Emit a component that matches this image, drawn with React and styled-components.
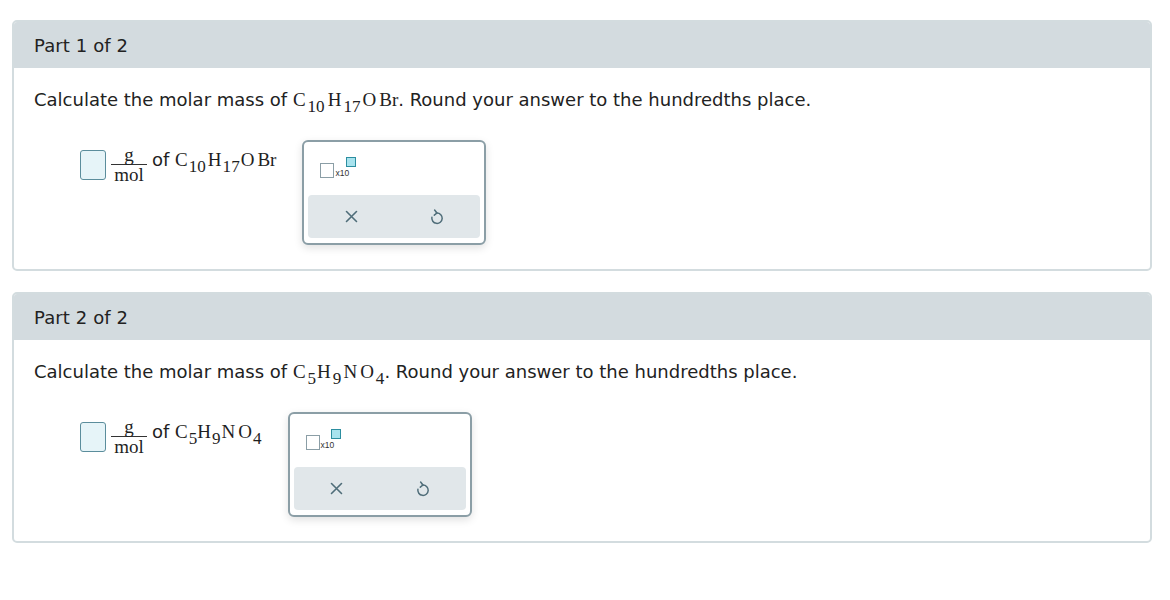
import React from "react";
import styled, { createGlobalStyle } from "styled-components";

const Global = createGlobalStyle`
  html, body { margin: 0; padding: 0; background: #ffffff; }
  body { font-family: "DejaVu Sans", Verdana, sans-serif; color: #1f1f1f; }
`;

const Page = styled.div`
  padding: 20px 18px 0 12px;
  display: flex;
  flex-direction: column;
  gap: 21px;
`;

const Card = styled.section`
  border: 2px solid #d3dcdf;
  border-radius: 5px;
  overflow: hidden;
  background: #fff;
`;

const Header = styled.div`
  height: 46px;
  background: #d3dbdf;
  display: flex;
  align-items: center;
  padding-left: 20px;
  font-size: 18px;
  letter-spacing: 0.1px;
  color: #222;
`;

const Body = styled.div`
  padding: 20px 20px 24px 20px;
`;

const Question = styled.div`
  font-size: 18px;
  line-height: 24px;
  height: 24px;
  color: #222;
  white-space: nowrap;
`;

const Formula = styled.span`
  font-family: "Liberation Serif", "Times New Roman", serif;
  font-size: 19px;
  letter-spacing: 0;
  word-spacing: 0;
`;

const Sub = styled.span`
  font-size: 0.9em;
  position: relative;
  top: 0.38em;
  line-height: 0;
  margin: 0 ${(p) => p.$gap}px 0 ${(p) => (p.$lead === undefined ? 2 : p.$lead)}px;
`;

const Thin = styled.span`
  display: inline-block;
  width: ${(p) => p.$w}px;
`;

const AnswerRow = styled.div`
  display: flex;
  align-items: flex-start;
  margin-top: 28px;
  padding-left: 46px;
`;

const Answer = styled.div`
  display: flex;
  align-items: flex-start;
  padding-top: 10px;
  margin-right: 26px;
`;

const InputBox = styled.div`
  box-sizing: border-box;
  width: 26px;
  height: 30px;
  border: 1.5px solid #5b8d9c;
  border-radius: 3px;
  background: #e6f4f8;
  margin-right: 5px;
`;

const Fraction = styled.span`
  display: inline-flex;
  flex-direction: column;
  align-items: center;
  font-family: "Liberation Serif", "Times New Roman", serif;
  font-size: 19px;
  margin-right: 5px;
  margin-top: -3px;
`;

const Num = styled.span`
  line-height: 15px;
  padding-bottom: 2px;
  border-bottom: 1.5px solid #333;
  width: 36px;
  text-align: center;
`;

const Den = styled.span`
  line-height: 18px;
  padding-top: 1px;
`;

const Label = styled.span`
  font-size: 18px;
  line-height: 24px;
  white-space: nowrap;
  margin-top: -2px;
`;

const Popup = styled.div`
  box-sizing: border-box;
  width: 184px;
  height: 105px;
  border: 2px solid #8b9ea6;
  border-radius: 6px;
  background: #fff;
  box-shadow: 0 3px 8px rgba(0, 0, 0, 0.12);
  display: flex;
  flex-direction: column;
  padding: 0 4px 5px;
`;

const IconArea = styled.div`
  flex: 1;
  display: flex;
  align-items: flex-start;
  padding: 15px 0 0 12px;
`;

const SciIcon = styled.span`
  display: inline-flex;
  align-items: flex-end;
  height: 21px;
`;

const BaseBox = styled.span`
  box-sizing: border-box;
  width: 14px;
  height: 15px;
  border: 1.5px solid #8b9ea6;
  background: #fff;
  display: inline-block;
`;

const Times = styled.span`
  font-family: "Liberation Sans", Arial, sans-serif;
  font-size: 8.5px;
  color: #333;
  margin-left: 1px;
  line-height: 9px;
`;

const ExpBox = styled.span`
  box-sizing: border-box;
  width: 10px;
  height: 10px;
  border: 1.5px solid #2c8ea0;
  background: #a8e3ee;
  display: inline-block;
  align-self: flex-start;
  margin-left: -3px;
`;

const ButtonBar = styled.div`
  height: 43px;
  background: #e1e7ea;
  border-radius: 4px;
  display: flex;
  align-items: center;
  justify-content: space-around;
`;

const IconButton = styled.button`
  border: none;
  background: transparent;
  padding: 0;
  width: 24px;
  height: 24px;
  display: flex;
  align-items: center;
  justify-content: center;
  color: #4f6d79;
`;

const XIcon = () => (
  <svg width="13" height="13" viewBox="0 0 13 13" fill="none" stroke="currentColor" strokeWidth="1.6" strokeLinecap="round">
    <path d="M1.5 1.5 L11.5 11.5 M11.5 1.5 L1.5 11.5" />
  </svg>
);

const UndoIcon = () => (
  <svg width="14" height="17" viewBox="0 0 14 17" fill="none" stroke="currentColor" strokeWidth="1.5" strokeLinecap="round" strokeLinejoin="round">
    <path d="M6.2 5 H7 A5.2 5.2 0 1 1 1.9 9.2" />
    <path d="M4.6 2 L7 5 L4.3 7.2" />
  </svg>
);

const C10 = ({ gap, lead }) => (
  <Formula>
    C<Sub $gap={gap} $lead={lead}>10</Sub>H<Sub $gap={gap - 1} $lead={lead}>17</Sub>O<Thin $w={3} />Br
  </Formula>
);

const C5 = ({ gap, lead }) => (
  <Formula>
    C<Sub $gap={gap - 2} $lead={lead}>5</Sub>H<Sub $gap={gap - 1} $lead={lead}>9</Sub>N<Thin $w={3} />O<Sub $gap={0} $lead={lead}>4</Sub>
  </Formula>
);

const Part = ({ index, Chem }) => (
  <Card>
    <Header>Part {index} of 2</Header>
    <Body>
      <Question>
        Calculate the molar mass of <Chem gap={3} lead={2} />. Round your answer to the hundredths place.
      </Question>
      <AnswerRow>
        <Answer>
          <InputBox />
          <Fraction>
            <Num>g</Num>
            <Den>mol</Den>
          </Fraction>
          <Label>
            of <Chem gap={2} lead={1} />
          </Label>
        </Answer>
        <Popup>
          <IconArea>
            <SciIcon>
              <BaseBox />
              <Times>x10</Times>
              <ExpBox />
            </SciIcon>
          </IconArea>
          <ButtonBar>
            <IconButton aria-label="clear"><XIcon /></IconButton>
            <IconButton aria-label="undo"><UndoIcon /></IconButton>
          </ButtonBar>
        </Popup>
      </AnswerRow>
    </Body>
  </Card>
);

export default function App() {
  return (
    <>
      <Global />
      <Page>
        <Part index={1} Chem={C10} />
        <Part index={2} Chem={C5} />
      </Page>
    </>
  );
}
